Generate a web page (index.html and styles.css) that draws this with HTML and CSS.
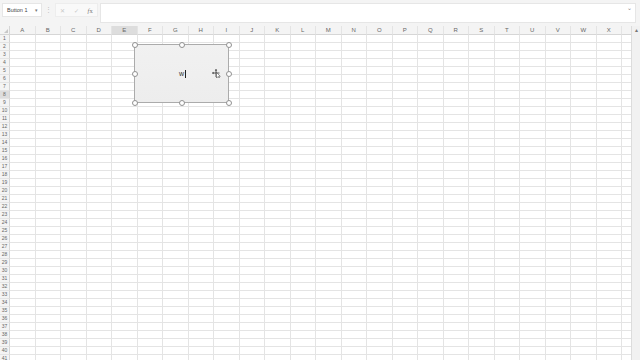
FILE: index.html
```html
<!DOCTYPE html>
<html lang="en">

<head>
  <meta charset="UTF-8">
  <title>Book1 - Excel</title>
  <link rel="stylesheet" href="styles.css">
</head>

<body>
  <div class="toolbar">
    <div class="name-box">
      <span>Button 1</span>
      <span class="caret">&#9662;</span>
    </div>
    <div class="grip">&#8942;</div>
    <div class="buttons">
      <span class="btn">&#10005;</span>
      <span class="btn">&#10003;</span>
      <span class="btn fx"><i>f</i>x</span>
    </div>
    <div class="formula">
      <span class="expand">&#8964;</span>
    </div>
  </div>

  <div class="workspace">
    <div class="sheet-wrap">
      <div class="sheet" id="sheet"></div>

      <!-- form control button, in edit mode -->
      <div class="shape">
        <span class="label">w<span class="text-caret"></span></span>
        <svg class="move" width="9" height="9" viewBox="0 0 9 9">
          <path d="M4 0.5 L4 8 M0.5 4 L7.5 4" stroke="#333" stroke-width="0.8" />
          <path d="M4 0 L2.8 1.5 L5.2 1.5 Z M0 4 L1.5 2.8 L1.5 5.2 Z" fill="#333" />
          <path d="M4.5 3.5 L4.5 9 L5.8 7.7 L6.8 9.5 L7.6 9 L6.6 7.3 L8.3 7.3 Z" fill="#fff" stroke="#333" stroke-width="0.5" />
        </svg>
        <span class="handle tl"></span>
        <span class="handle tc"></span>
        <span class="handle tr"></span>
        <span class="handle ml"></span>
        <span class="handle mr"></span>
        <span class="handle bl"></span>
        <span class="handle bc"></span>
        <span class="handle br"></span>
      </div>
    </div>

    <div class="scrollbar">
      <span class="arrow">&#9652;</span>
    </div>
  </div>

  <script>
    const columns = "ABCDEFGHIJKLMNOPQRSTUVWXY".split("")
    const rowCount = 41
    const activeColumn = "E"
    const activeRow = 8
    const sheet = document.getElementById("sheet")

    // corner with the select-all triangle
    const corner = document.createElement("div")
    corner.className = "corner"
    sheet.appendChild(corner)

    columns.forEach((letter) => {
      const head = document.createElement("div")
      head.className = "col-head"
      if (letter === activeColumn) head.classList.add("active")
      head.textContent = letter === "Y" ? "" : letter
      sheet.appendChild(head)
    })

    for (let row = 1; row <= rowCount; row++) {
      const head = document.createElement("div")
      head.className = "row-head"
      if (row === activeRow) head.classList.add("active")
      head.textContent = row
      sheet.appendChild(head)

      columns.forEach(() => {
        const cell = document.createElement("div")
        cell.className = "cell"
        sheet.appendChild(cell)
      })
    }
  </script>
</body>

</html>
```

FILE: styles.css
```css
* {
  box-sizing: border-box;
}

:root {
  --col: 25.5px;
  --row: 8px;
  --grid: #e4e4e4;
  --head: #f4f4f4;
  --head-line: #d6d6d6;
  --text: #555;
}

html,
body {
  height: 100%;
}

body {
  margin: 0;
  font-family: "Liberation Sans", Arial, sans-serif;
  color: var(--text);
  background-color: #fff;
  overflow: hidden;
  display: flex;
  flex-direction: column;
  -webkit-font-smoothing: antialiased;
}

.toolbar {
  display: flex;
  align-items: flex-start;
  height: 26px;
  padding: 3px 4px 0 2px;
  background-color: #f4f4f4;
  flex-shrink: 0;
}

.name-box {
  display: flex;
  align-items: center;
  justify-content: space-between;
  width: 40px;
  height: 14px;
  padding: 0 3px 0 4px;
  background-color: #fff;
  border: 1px solid #e6e6e6;
  font-size: 5.5px;
  color: #444;
}

.caret {
  font-size: 5px;
  color: #777;
}

.grip {
  width: 13px;
  height: 14px;
  line-height: 14px;
  text-align: center;
  font-size: 7px;
  color: #c0c0c0;
}

.buttons {
  display: flex;
  align-items: center;
  justify-content: space-around;
  width: 43px;
  height: 14px;
  background-color: #f9f9f9;
  border: 1px solid #ededed;
  font-size: 6px;
  color: #c8c8c8;
}

.buttons .fx {
  color: #777;
  font-family: "Liberation Serif", serif;
  font-size: 6.5px;
}

.formula {
  flex: 1;
  height: 20px;
  margin-left: 2px;
  background-color: #fff;
  border: 1px solid #e6e6e6;
  position: relative;
}

.expand {
  position: absolute;
  right: 3px;
  top: 0;
  font-size: 6px;
  color: #888;
}

.workspace {
  flex: 1;
  display: flex;
  min-height: 0;
}

.sheet-wrap {
  flex: 1;
  position: relative;
  overflow: hidden;
}

.sheet {
  display: grid;
  grid-template-columns: 10px repeat(25, var(--col));
  grid-template-rows: 9px;
  grid-auto-rows: var(--row);
}

.corner {
  background-color: var(--head);
  border-right: 1px solid var(--head-line);
  border-bottom: 1px solid var(--head-line);
  position: relative;
}

.corner::after {
  content: "";
  position: absolute;
  right: 1px;
  bottom: 1px;
  border-left: 4px solid transparent;
  border-bottom: 4px solid #c8c8c8;
}

.col-head,
.row-head {
  display: flex;
  align-items: center;
  justify-content: center;
  background-color: var(--head);
  font-size: 6px;
  line-height: 1;
  color: #666;
}

.col-head {
  border-right: 1px solid var(--grid);
  border-bottom: 1px solid var(--head-line);
}

.row-head {
  border-right: 1px solid var(--head-line);
  border-bottom: 1px solid var(--grid);
  font-size: 5px;
}

.col-head.active,
.row-head.active {
  background-color: #dddddd;
}

.cell {
  border-right: 1px solid var(--grid);
  border-bottom: 1px solid var(--grid);
}

.shape {
  position: absolute;
  left: 134px;
  top: 18px;
  width: 95px;
  height: 59px;
  border: 1px solid #ababab;
  background: linear-gradient(#f1f1f1, #ededed);
}

.label {
  position: absolute;
  left: 44px;
  top: 25px;
  font-size: 7px;
  line-height: 8px;
  color: #333;
}

.text-caret {
  display: inline-block;
  width: 1px;
  height: 8px;
  margin-left: 0.5px;
  vertical-align: top;
  background-color: #222;
}

.move {
  position: absolute;
  left: 77px;
  top: 24px;
}

.handle {
  position: absolute;
  width: 6px;
  height: 6px;
  border-radius: 50%;
  border: 1px solid #919191;
  background-color: #fff;
}

.tl, .tc, .tr { top: -3.5px; }
.ml, .mr { top: 26px; }
.bl, .bc, .br { bottom: -3.5px; }
.tl, .ml, .bl { left: -3.5px; }
.tc, .bc { left: 43.5px; }
.tr, .mr, .br { right: -3.5px; }

.scrollbar {
  width: 9px;
  flex-shrink: 0;
  background-color: #f1f1f1;
  border-left: 1px solid #dcdcdc;
  text-align: center;
}

.arrow {
  display: block;
  font-size: 6px;
  line-height: 9px;
  color: #777;
}
```
